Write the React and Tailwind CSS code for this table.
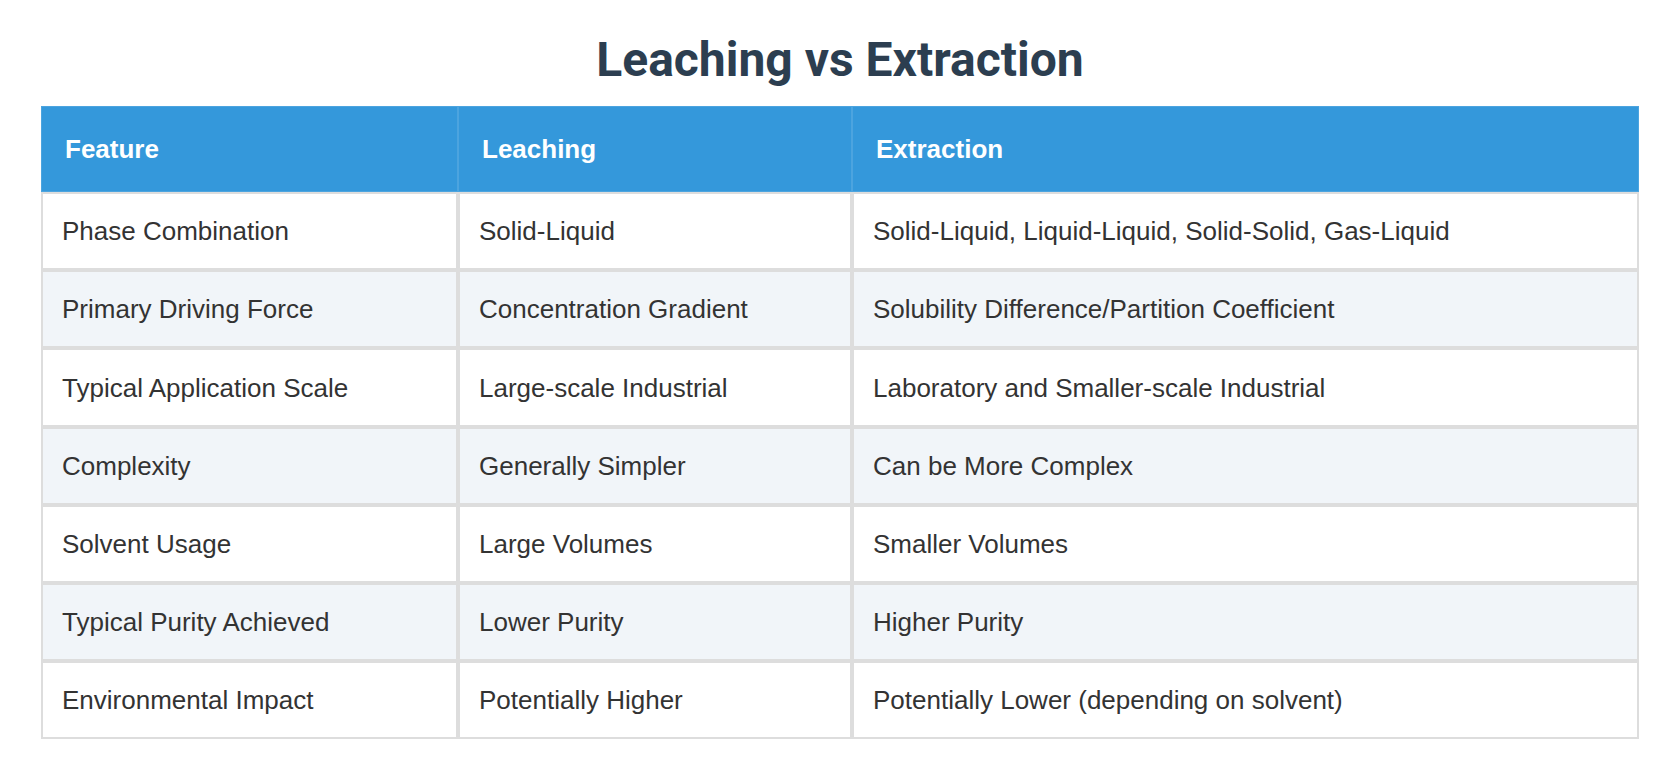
const rows = [
  ["Phase Combination", "Solid-Liquid", "Solid-Liquid, Liquid-Liquid, Solid-Solid, Gas-Liquid"],
  ["Primary Driving Force", "Concentration Gradient", "Solubility Difference/Partition Coefficient"],
  ["Typical Application Scale", "Large-scale Industrial", "Laboratory and Smaller-scale Industrial"],
  ["Complexity", "Generally Simpler", "Can be More Complex"],
  ["Solvent Usage", "Large Volumes", "Smaller Volumes"],
  ["Typical Purity Achieved", "Lower Purity", "Higher Purity"],
  ["Environmental Impact", "Potentially Higher", "Potentially Lower (depending on solvent)"],
];

const headers = ["Feature", "Leaching", "Extraction"];
const widths = ["w-[417px]", "w-[394px]", "w-[787px]"];

export default function App() {
  return (
    <div className="min-h-screen bg-white px-[41px] pt-[30px] font-['Liberation_Sans',Arial,sans-serif]">
      <h1 className="mb-[16px] text-center font-['Roboto',sans-serif] text-[48px] font-bold leading-[60px] text-[#2c3e50]">
        Leaching vs Extraction
      </h1>

      <table className="w-full border-separate border-spacing-0 text-[26px] text-[#333]">
        <thead>
          <tr className="bg-[#3498db]">
            {headers.map((h, i) => (
              <th
                key={h}
                className={`${widths[i]} border border-[#4ca4df] px-[23px] py-[23px] text-left font-bold leading-[38px] text-white`}
              >
                {h}
              </th>
            ))}
          </tr>
        </thead>
        <tbody>
          {rows.map((row, r) => (
            <tr key={row[0]} className={r % 2 === 1 ? "bg-[#f1f5f9]" : "bg-white"}>
              {row.map((cell, i) => (
                <td
                  key={i}
                  className="border-2 border-[#dddddd] px-[19px] pt-[18.2px] pb-[18px] leading-[38px]"
                >
                  {cell}
                </td>
              ))}
            </tr>
          ))}
        </tbody>
      </table>
    </div>
  );
}
